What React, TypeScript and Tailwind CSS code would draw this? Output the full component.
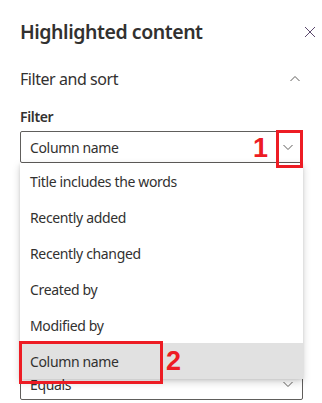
import React from "react";

const items = [
  "Title includes the words",
  "Recently added",
  "Recently changed",
  "Created by",
  "Modified by",
  "Column name",
];

function ChevronDown({ className }: { className?: string }) {
  return (
    <svg width="12" height="12" viewBox="0 0 12 12" className={className} fill="none">
      <path d="M1.5 4 L6 8.5 L10.5 4" stroke="#605e5c" strokeWidth="1" />
    </svg>
  );
}

export default function App() {
  return (
    <div
      className="relative w-[322px] h-[403px] overflow-hidden bg-white text-[#323130]"
      style={{ fontFamily: '"Noto Sans", "Open Sans", sans-serif' }}
    >
      <div className="pl-5 pr-[6px] pt-[17px] flex items-center justify-between">
        <h1 className="text-[19.5px] leading-[30px] font-semibold tracking-[-0.45px] text-[#323130]">Highlighted content</h1>
        <svg width="12" height="12" viewBox="0 0 12 12">
          <path d="M1 1 L11 11 M11 1 L1 11" stroke="#5c4a6e" strokeWidth="1" />
        </svg>
      </div>

      <div className="pl-5 pr-[21px] mt-[21px] flex items-center justify-between">
        <span className="text-[16px] leading-[22px] tracking-[-0.45px]">Filter and sort</span>
        <svg width="12" height="12" viewBox="0 0 12 12">
          <path d="M1.5 8 L6 3.5 L10.5 8" stroke="#605e5c" strokeWidth="1" fill="none" />
        </svg>
      </div>

      <div className="pl-5 pr-[19px] mt-[17px] text-[14px] tracking-[-0.35px]">
        <div className="leading-[20px] font-semibold pb-[4px]">Filter</div>
        <div className="relative">
          <div className="h-[32px] border border-[#605e5c] rounded-[2px] flex items-center justify-between pl-[9px] pr-[8px]">
            <span>Column name</span>
            <ChevronDown />
          </div>
          <div className="absolute left-0 right-0 top-[32px] z-10 bg-white shadow-[0_3px_8px_rgba(0,0,0,0.18),0_1px_3px_rgba(0,0,0,0.1)]">
            {items.map((it) => (
              <div
                key={it}
                className={`h-[36px] flex items-center pl-[10px] ${
                  it === "Column name" ? "bg-[#e1e1e1]" : ""
                }`}
              >
                {it}
              </div>
            ))}
          </div>
        </div>

        <div className="mt-[205px] h-[32px] border border-[#605e5c] rounded-[2px] flex items-center justify-between pl-[9px] pr-[8px]">
          <span>Equals</span>
          <ChevronDown />
        </div>
      </div>

      {/* annotations */}
      <div className="absolute left-[276px] top-[130px] w-[27px] h-[38px] border-[3px] border-[#ed1c24] z-20" />
      <div className="absolute left-[253px] top-[133px] z-20 text-[27px] font-bold leading-[30px] text-[#ed1c24]" style={{ fontFamily: '"Liberation Sans", Arial, sans-serif' }}>1</div>
      <div className="absolute left-[19px] top-[341px] w-[144px] h-[43px] border-[3px] border-[#ed1c24] z-20" />
      <div className="absolute left-[166px] top-[346px] z-20 text-[27px] font-bold leading-[30px] text-[#ed1c24]" style={{ fontFamily: '"Liberation Sans", Arial, sans-serif' }}>2</div>
    </div>
  );
}
